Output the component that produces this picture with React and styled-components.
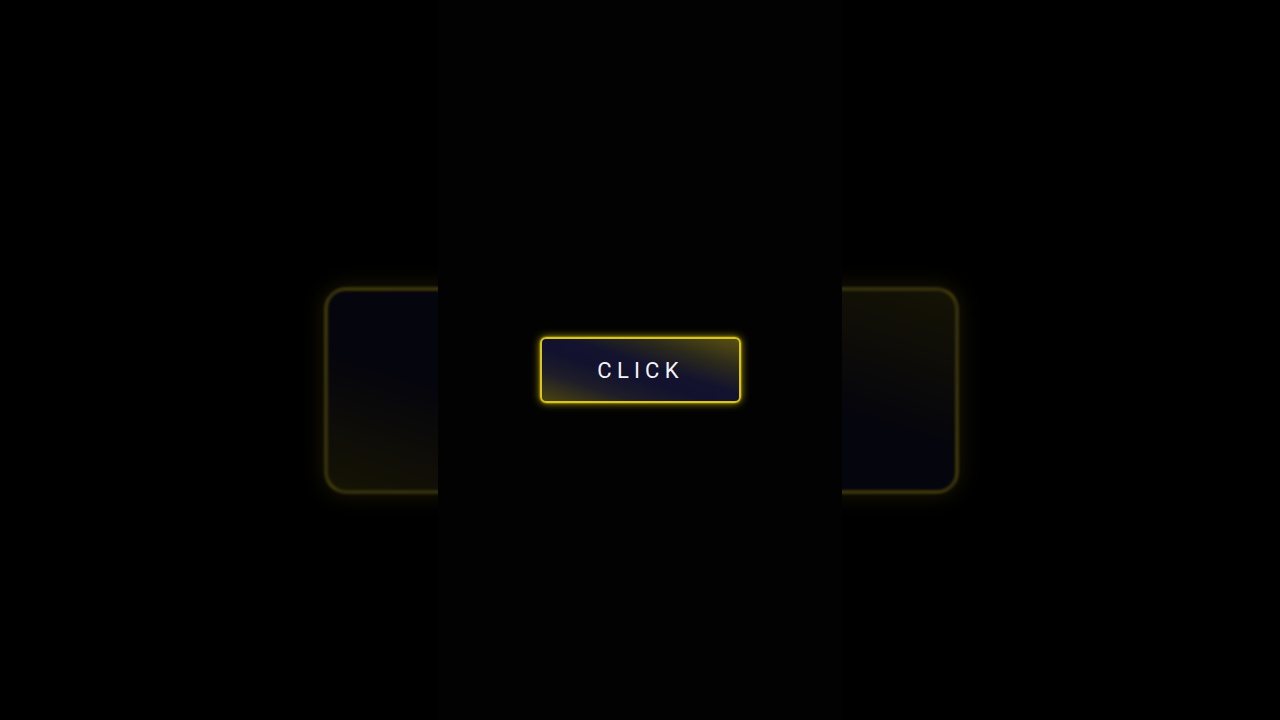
import React from "react";
import styled, { createGlobalStyle } from "styled-components";

const Global = createGlobalStyle`
  html, body { margin: 0; padding: 0; background: #000; }
  body { font-family: Roboto, "Liberation Sans", sans-serif; overflow: hidden; }
`;

const Stage = styled.div`
  width: 1280px;
  height: 720px;
  display: grid;
  background: #000;
  overflow: hidden;
`;

const Backdrop = styled.div`
  grid-area: 1 / 1;
  display: flex;
  align-items: center;
  justify-content: center;
  padding-top: 61px;
`;

const BigButton = styled.div`
  width: 627px;
  height: 199px;
  margin-left: 3px;
  border: 4px solid rgba(150, 135, 20, 0.55);
  border-radius: 22px;
  background: linear-gradient(
    to top right,
    rgba(60, 54, 10, 0.6) 0%,
    rgba(12, 12, 30, 0.7) 35%,
    rgba(12, 12, 30, 0.7) 60%,
    rgba(60, 54, 10, 0.6) 100%
  );
  box-shadow: 0 0 22px rgba(170, 150, 20, 0.28);
  filter: blur(1.2px) brightness(0.6);
`;

const Column = styled.div`
  grid-area: 1 / 1;
  justify-self: center;
  width: 404px;
  height: 720px;
  background: #020202;
  display: flex;
  align-items: center;
  justify-content: center;
  padding-top: 20px;
  box-sizing: border-box;
  position: relative;
  z-index: 1;
`;

const GlowButton = styled.button`
  width: 201px;
  height: 66px;
  margin-left: 1px;
  box-sizing: border-box;
  border: 2px solid #d9c51c;
  border-radius: 6px;
  background: linear-gradient(
    to top right,
    #4a440e 0%,
    #1e1d28 24%,
    #12122f 42%,
    #13132e 56%,
    #2c2a1a 76%,
    #5a5010 100%
  );
  box-shadow: 0 0 8px rgba(230, 210, 30, 0.75), 0 0 2px rgba(240, 220, 40, 0.9);
  color: #f4f4f8;
  font-family: Roboto, "Liberation Sans", sans-serif;
  font-size: 22px;
  font-weight: 400;
  letter-spacing: 5.2px;
  padding: 0 0 0 0;
  display: flex;
  align-items: center;
  justify-content: center;
  cursor: pointer;
`;

export default function App() {
  return (
    <Stage>
      <Global />
      <Backdrop>
        <BigButton />
      </Backdrop>
      <Column>
        <GlowButton>CLICK</GlowButton>
      </Column>
    </Stage>
  );
}
